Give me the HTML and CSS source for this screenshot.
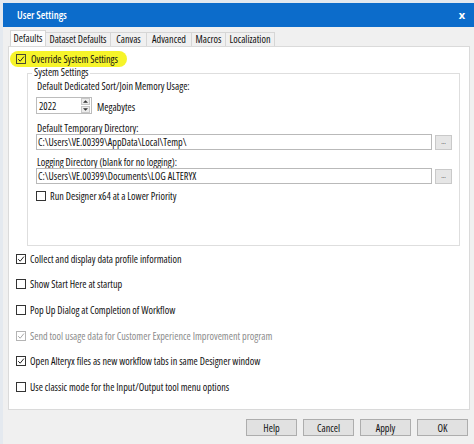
FILE: index.html
```html
<!DOCTYPE html>
<html lang="en">
<head>
  <meta charset="UTF-8">
  <title>User Settings</title>
  <link rel="stylesheet" href="styles.css">
</head>
<body>
  <div class="dialog">
    <div class="title-bar">
      <span class="title">User Settings</span>
      <span class="close">x</span>
    </div>
    <div class="tabs">
      <div class="tab active tab-defaults">Defaults</div>
      <div class="tab tab-dataset">Dataset Defaults</div>
      <div class="tab tab-canvas">Canvas</div>
      <div class="tab tab-advanced">Advanced</div>
      <div class="tab tab-macros">Macros</div>
      <div class="tab tab-local">Localization</div>
    </div>
    <div class="panel">
      <div class="override">
        <span class="check"><svg viewBox="0 0 8 8"><path d="M1.2 4.2 L3.2 6.2 L6.9 1.6" fill="none" stroke="#222" stroke-width="1"/></svg></span>
        <span>Override System Settings</span>
      </div>
      <div class="group">
        <div class="group-title">System Settings</div>
        <div class="field-label first">Default Dedicated Sort/Join Memory Usage:</div>
        <div class="spin-row">
          <div class="spin">
            <span class="spin-value">2022</span>
            <span class="spin-btns">
              <span class="spin-btn"><svg viewBox="0 0 6 3"><path d="M0 3 L3 0 L6 3 Z" fill="#333"/></svg></span>
              <span class="spin-btn"><svg viewBox="0 0 6 3"><path d="M0 0 L3 3 L6 0 Z" fill="#333"/></svg></span>
            </span>
          </div>
          <span class="unit">Megabytes</span>
        </div>
        <div class="field-label spaced">Default Temporary Directory:</div>
        <div class="path-row">
          <div class="textbox">C:\Users\VE.00399\AppData\Local\Temp\</div>
          <div class="browse">...</div>
        </div>
        <div class="field-label gap">Logging Directory (blank for no logging):</div>
        <div class="path-row">
          <div class="textbox">C:\Users\VE.00399\Documents\LOG ALTERYX</div>
          <div class="browse">...</div>
        </div>
        <div class="option inner">
          <span class="check"></span>
          <span>Run Designer x64 at a Lower Priority</span>
        </div>
      </div>
      <div class="options">
        <div class="option">
          <span class="check"><svg viewBox="0 0 8 8"><path d="M1.2 4.2 L3.2 6.2 L6.9 1.6" fill="none" stroke="#222" stroke-width="1"/></svg></span>
          <span>Collect and display data profile information</span>
        </div>
        <div class="option">
          <span class="check"></span>
          <span>Show Start Here at startup</span>
        </div>
        <div class="option">
          <span class="check"></span>
          <span>Pop Up Dialog at Completion of Workflow</span>
        </div>
        <div class="option disabled">
          <span class="check"><svg viewBox="0 0 8 8"><path d="M1.2 4.2 L3.2 6.2 L6.9 1.6" fill="none" stroke="#a8a8a8" stroke-width="1"/></svg></span>
          <span>Send tool usage data for Customer Experience Improvement program</span>
        </div>
        <div class="option">
          <span class="check"><svg viewBox="0 0 8 8"><path d="M1.2 4.2 L3.2 6.2 L6.9 1.6" fill="none" stroke="#222" stroke-width="1"/></svg></span>
          <span>Open Alteryx files as new workflow tabs in same Designer window</span>
        </div>
        <div class="option">
          <span class="check"></span>
          <span>Use classic mode for the Input/Output tool menu options</span>
        </div>
      </div>
    </div>
    <div class="buttons">
      <button>Help</button>
      <button>Cancel</button>
      <button>Apply</button>
      <button>OK</button>
    </div>
  </div>
</body>
</html>
```

FILE: styles.css
```css
body {
  margin: 0;
  background-color: #e4e9ef;
  font-family: 'Open Sans', 'Noto Sans', sans-serif;
  font-stretch: 76%;
  font-size: 10.2px;
  line-height: 12px;
  color: #111;
}
.dialog {
  margin: 3px 0 0 3px;
  width: 471px;
  height: 441px;
  background-color: #f0f0f0;
  display: flex;
  flex-direction: column;
}
.title-bar {
  height: 24px;
  flex-shrink: 0;
  background-color: #0c6ccb;
  color: white;
  display: flex;
  align-items: center;
  justify-content: space-between;
  padding: 0 9px 0 14px;
}
.title {
  font-size: 10.5px;
  font-weight: 600;
}
.close {
  font-weight: bold;
  font-size: 11px;
  font-stretch: 100%;
}
.tabs {
  display: flex;
  align-items: flex-end;
  height: 19px;
  flex-shrink: 0;
  padding-left: 7px;
}
.tab {
  box-sizing: border-box;
  height: 14px;
  line-height: 13px;
  border: 1px solid #d6d6d6;
  border-bottom: none;
  border-left: none;
  background-color: #f0f0f0;
  text-align: center;
  white-space: nowrap;
}
.tab.active {
  height: 16px;
  line-height: 15px;
  background-color: #fcfcfc;
  border-left: 1px solid #d6d6d6;
}
.tab-defaults { width: 36px; }
.tab-dataset { width: 65px; }
.tab-canvas { width: 36px; }
.tab-advanced { width: 45px; }
.tab-macros { width: 34px; }
.tab-local { width: 49px; }
.panel {
  box-sizing: border-box;
  margin: 0 4px 0 5px;
  height: 364px;
  flex-shrink: 0;
  background-color: #fff;
  border: 1px solid #dadada;
}
.check {
  box-sizing: border-box;
  width: 10px;
  height: 10px;
  border: 1px solid #333;
  background-color: #fff;
  display: inline-flex;
  flex-shrink: 0;
}
.check svg {
  width: 8px;
  height: 8px;
}
.override {
  display: inline-flex;
  align-items: center;
  gap: 5px;
  height: 16px;
  margin: 4px 0 0 1px;
  padding: 0 9px 0 6px;
  background-color: #f6f42a;
  border-radius: 8px;
}
.override .check {
  border-color: #4a4a30;
  background-color: transparent;
}
.group {
  box-sizing: border-box;
  margin: 6px 9px 0 18px;
  height: 173px;
  border: 1px solid #dedede;
  padding-left: 8px;
}
.group-title {
  display: table;
  margin: -8px 0 0 -4px;
  padding: 0 2px;
  background-color: #fff;
}
.field-label {
  margin-left: 1px;
}
.field-label.first {
  margin-top: 2px;
}
.field-label.spaced {
  margin-top: 8px;
}
.field-label.gap {
  margin-top: 6px;
}
.spin-row {
  display: flex;
  align-items: center;
  gap: 5px;
  margin-top: 5px;
}
.spin {
  box-sizing: border-box;
  width: 56px;
  height: 17px;
  border: 1px solid #bcbcbc;
  display: flex;
  justify-content: space-between;
  align-items: center;
}
.spin-value {
  padding-left: 2px;
}
.spin-btns {
  display: flex;
  flex-direction: column;
  gap: 1px;
  padding-right: 1px;
}
.spin-btn {
  box-sizing: border-box;
  width: 9px;
  height: 7px;
  border: 1px solid #c8c8c8;
  background-color: #ececec;
  display: flex;
  align-items: center;
  justify-content: center;
}
.spin-btn svg {
  width: 5px;
  height: 3px;
}
.unit {
  margin-top: 3px;
}
.path-row {
  display: flex;
  align-items: center;
  gap: 3px;
}
.textbox {
  box-sizing: border-box;
  width: 396px;
  height: 16px;
  line-height: 14px;
  border: 1px solid #b9b9b9;
  padding-left: 1px;
}
.browse {
  box-sizing: border-box;
  width: 17px;
  height: 15px;
  border: 1px solid #c9c9c9;
  background-color: #e6e6e6;
  font-size: 7px;
  line-height: 11px;
  text-align: center;
  color: #444;
}
.option {
  display: flex;
  align-items: center;
  gap: 4px;
  height: 25.6px;
  margin-left: 7px;
}
.option.inner {
  height: 12px;
  margin: 6px 0 0 0;
}
.option.disabled {
  color: #8c8c8c;
}
.option.disabled .check {
  border-color: #b4b4b4;
}
.buttons {
  display: flex;
  justify-content: flex-end;
  gap: 6px;
  padding: 9px 6px 0 0;
}
button {
  width: 51px;
  height: 17px;
  border: 1px solid #adadad;
  background-color: #e1e1e1;
  font-family: 'Open Sans', 'Noto Sans', sans-serif;
  font-stretch: 76%;
  font-size: 10.2px;
  color: #111;
  padding: 0;
}
```
